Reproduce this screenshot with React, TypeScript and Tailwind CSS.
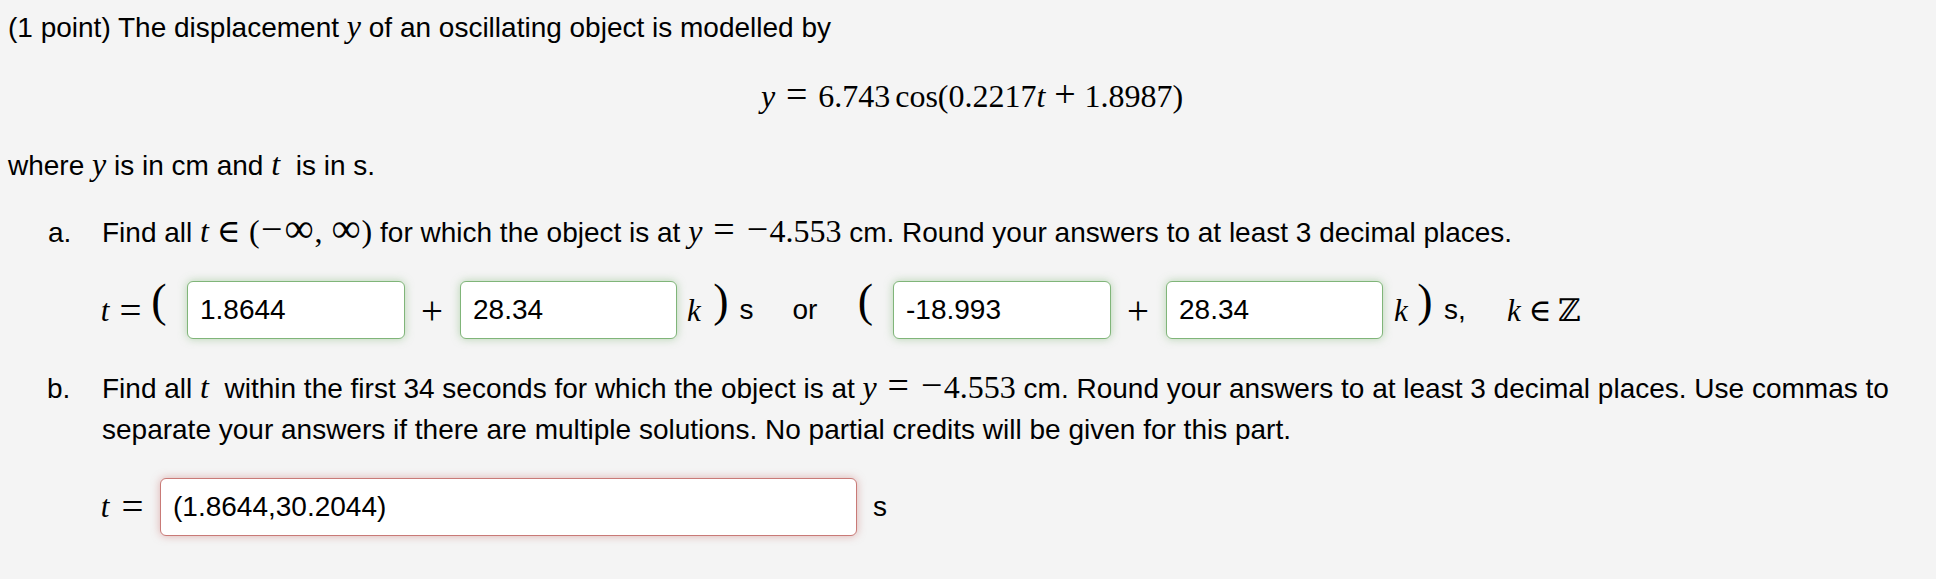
import React from "react";

type Kind = "ok" | "bad";

function AnswerBox({ value, width, kind }: { value: string; width: string; kind: Kind }) {
  const tone =
    kind === "ok"
      ? "border-[#80b579] shadow-[0_0_8px_rgba(120,180,110,0.5)]"
      : "border-[#c97a77] shadow-[0_0_8px_rgba(200,110,105,0.5)]";
  return (
    <input
      readOnly
      value={value}
      className={`${width} h-[58px] rounded-md border-[1.5px] ${tone} bg-white pl-[12px] text-[28px] text-black outline-none font-['Liberation_Sans',Arial,sans-serif]`}
    />
  );
}

// math bits, spaced roughly like MathJax
const serif = "font-['Liberation_Serif','DejaVu_Serif',serif]";

function M({ children }: { children: React.ReactNode }) {
  return <span className={`${serif} text-[32px] leading-none`}>{children}</span>;
}

function I({ children }: { children: React.ReactNode }) {
  return <span className="italic">{children}</span>;
}

// relation / binary operator with thick spaces around it
function Rel({ children }: { children: React.ReactNode }) {
  return (
    <span className="inline-block w-[25px] mx-[9px] text-center text-[38px] leading-[20px]">{children}</span>
  );
}

function Minus() {
  return <span className="inline-block w-[24px] text-center text-[38px] leading-[20px]">−</span>;
}

function Inf() {
  return <span className="inline-block w-[31px] text-center text-[41px] leading-[20px]">∞</span>;
}

function Sym({ children, className = "" }: { children: React.ReactNode; className?: string }) {
  return (
    <span className={`${serif} text-[31px] leading-none flex justify-center ${className}`}>
      {children}
    </span>
  );
}

function BigOp({ children, className = "" }: { children: React.ReactNode; className?: string }) {
  return (
    <span className={`${serif} text-[39px] leading-none flex justify-center ${className}`}>
      {children}
    </span>
  );
}

function Paren({ children, className = "" }: { children: React.ReactNode; className?: string }) {
  return (
    <span className={`${serif} text-[46px] leading-none -mt-[18px] flex justify-center ${className}`}>
      {children}
    </span>
  );
}

export default function App() {
  return (
    <div className="w-full h-[579px] bg-[#f4f4f4] text-black pl-2 pt-[7px] font-['Liberation_Sans',Arial,sans-serif] text-[28px] leading-[41px] overflow-hidden">
      <p>
        (1 point) The displacement{" "}
        <M>
          <I>y</I>
        </M>{" "}
        of an oscillating object is modelled by
      </p>

      <div className={`mt-[28px] h-[41px] text-center text-[32px] ${serif}`}>
        <I>y</I>
        <Rel>=</Rel>
        6.743<span className="ml-[5px]">cos(0.2217</span>
        <I>t</I>
        <span className="inline-block w-[25px] mx-[7px] text-center text-[38px] leading-[20px]">+</span>
        1.8987)
      </div>

      <p className="mt-[28px]">
        where{" "}
        <M>
          <I>y</I>
        </M>{" "}
        is in cm and{" "}
        <M>
          <I>t</I>
        </M>
        &nbsp; is in s.
      </p>

      {/* part a */}
      <div className="mt-[26px] flex">
        <span className="ml-[40px] w-[54px]">a.</span>
        <div className="flex-1">
          <p>
            Find all{" "}
            <M>
              <I>t</I>
              <span className="inline-block w-[21px] ml-[8px] mr-[11px] text-center">∈</span>(
              <Minus />
              <Inf />, <Inf />)
            </M>{" "}
            for which the object is at{" "}
            <M>
              <I>y</I>
              <Rel>=</Rel>
              <Minus />
              4.553
            </M>{" "}
            cm. Round your answers to at least 3 decimal places.
          </p>
        </div>
      </div>

      <div className="mt-[28px] ml-[92px] h-[58px] flex items-center">
        <Sym className="w-[10px] italic">t</Sym>
        <BigOp className="ml-[7px] w-[27px]">=</BigOp>
        <Paren className="ml-[6px] w-[18px]">(</Paren>
        <span className="ml-[19px]">
          <AnswerBox value="1.8644" width="w-[218px]" kind="ok" />
        </span>
        <BigOp className="ml-[9px] w-[36px]">+</BigOp>
        <span className="ml-[10px]">
          <AnswerBox value="28.34" width="w-[217px]" kind="ok" />
        </span>
        <Sym className="ml-[7px] w-[20px] italic">k</Sym>
        <Paren className="ml-[9px] w-[16px]">)</Paren>
        <span className="ml-[9px] w-[17px] leading-none text-center">s</span>
        <span className="ml-[35px] w-[30px] leading-none text-center">or</span>
        <Paren className="ml-[37px] w-[17px]">(</Paren>
        <span className="ml-[19px]">
          <AnswerBox value="-18.993" width="w-[218px]" kind="ok" />
        </span>
        <BigOp className="ml-[9px] w-[36px]">+</BigOp>
        <span className="ml-[10px]">
          <AnswerBox value="28.34" width="w-[217px]" kind="ok" />
        </span>
        <Sym className="ml-[8px] w-[20px] italic">k</Sym>
        <Paren className="ml-[6px] w-[16px]">)</Paren>
        <span className="ml-[11px] w-[22px] leading-none">s,</span>
        <span className={`ml-[41px] ${serif} text-[31px] leading-none`}>
          <span className="italic">k</span>
          <span className="inline-block w-[21px] mx-[8px] text-center">∈</span>ℤ
        </span>
      </div>

      {/* part b */}
      <div className="mt-[29px] flex">
        <span className="ml-[39px] w-[55px]">b.</span>
        <div className="flex-1">
          <p>
            Find all{" "}
            <M>
              <I>t</I>
            </M>
            &nbsp; within the first 34 seconds for which the object is at{" "}
            <M>
              <I>y</I>
              <Rel>=</Rel>
              <Minus />
              4.553
            </M>{" "}
            cm. Round your answers to at least 3 decimal places. Use commas to
            <br />
            separate your answers if there are multiple solutions. No partial credits will be given for this
            part.
          </p>
        </div>
      </div>

      <div className="mt-[28px] ml-[92px] h-[57px] flex items-center">
        <Sym className="w-[10px] italic">t</Sym>
        <BigOp className="ml-[9px] w-[27px]">=</BigOp>
        <span className="ml-[14px]">
          <AnswerBox value="(1.8644,30.2044)" width="w-[697px]" kind="bad" />
        </span>
        <span className="ml-[16px] w-[14px] leading-none">s</span>
      </div>
    </div>
  );
}
